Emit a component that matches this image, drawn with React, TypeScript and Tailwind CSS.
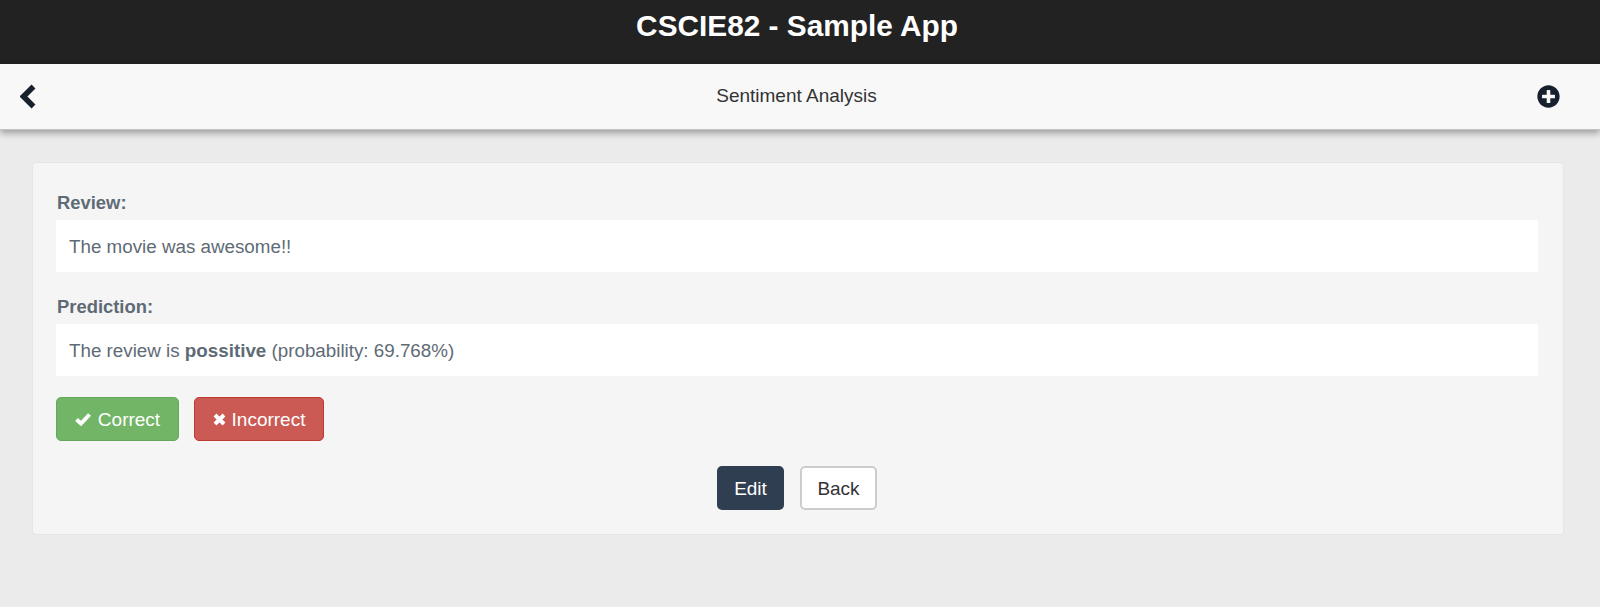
import React from "react";
import { FaPlusCircle } from "react-icons/fa";

const App = () => {
  return (
    <div className="min-h-[607px] bg-[#ebebeb] font-['Liberation_Sans',Arial,sans-serif] text-[#5e6b75] overflow-hidden">
      <header className="h-[64px] bg-[#222222] flex justify-center pr-[6px]">
        <h1 className="pt-[9px] text-[29.8px] leading-[34px] font-bold text-white">CSCIE82 - Sample App</h1>
      </header>

      <nav className="h-[66px] bg-[#f8f8f8] border-b border-[#c4c4c4] shadow-[0_3px_7px_rgba(0,0,0,0.35)] flex items-center justify-between pl-[20px] pr-[40px] relative">
        <svg width="16" height="25" viewBox="0 0 16 25" className="text-[#17212e]">
          <polyline points="13.5,2.5 3.5,12.5 13.5,22.5" fill="none" stroke="currentColor" strokeWidth="5.5" />
        </svg>
        <span className="ml-[20px] text-[19px] text-[#333333]">Sentiment Analysis</span>
        <FaPlusCircle className="w-[23px] h-[23px] text-[#17212e]" />
      </nav>

      <main className="pt-[32px] pl-[32px] pr-[36px]">
        <section className="h-[373px] bg-[#f5f5f5] border border-[#e5e5e5] rounded-[4px] pt-[28px] pl-[23px] pr-[25px]">
          <label className="block text-[18.4px] leading-[24px] font-bold pl-[1px]">Review:</label>
          <div className="mt-[5px] h-[52px] bg-white flex items-center pt-[3px] px-[13px] text-[18.8px]">
            The movie was awesome!!
          </div>

          <label className="block mt-[23px] text-[18.4px] leading-[24px] font-bold pl-[1px]">Prediction:</label>
          <div className="mt-[5px] h-[52px] bg-white flex items-center pt-[3px] px-[13px] text-[18.8px] whitespace-pre">
            The review is <b>possitive</b> (probability: 69.768%)
          </div>

          <div className="mt-[21px] flex gap-[15px]">
            <button className="h-[44px] w-[123px] rounded-[5px] bg-[#72b566] border border-[#63a95a] text-white text-[19px] flex items-center justify-center gap-[7px]">
              <svg width="16" height="13" viewBox="0 0 16 13">
                <polyline points="1.5,6.5 6,10.5 14.5,1.5" fill="none" stroke="currentColor" strokeWidth="4" />
              </svg>
              <span className="pt-[3px]">Correct</span>
            </button>
            <button className="h-[44px] w-[130px] rounded-[5px] bg-[#cb5a54] border border-[#c0392f] text-white text-[19px] flex items-center justify-center gap-[6px]">
              <svg width="13" height="13" viewBox="0 0 13 13">
                <path d="M2 2L11 11M11 2L2 11" fill="none" stroke="currentColor" strokeWidth="4" />
              </svg>
              <span className="pt-[3px]">Incorrect</span>
            </button>
          </div>

          <div className="mt-[25px] flex justify-center gap-[16px]">
            <button className="h-[44px] w-[67px] rounded-[5px] bg-[#2f3e50] text-white text-[19px] pt-[3px]">Edit</button>
            <button className="h-[44px] w-[77px] rounded-[5px] bg-white border-2 border-[#cccccc] text-[#333333] text-[19px] pt-[3px]">Back</button>
          </div>
        </section>
      </main>
    </div>
  );
};

export default App;
